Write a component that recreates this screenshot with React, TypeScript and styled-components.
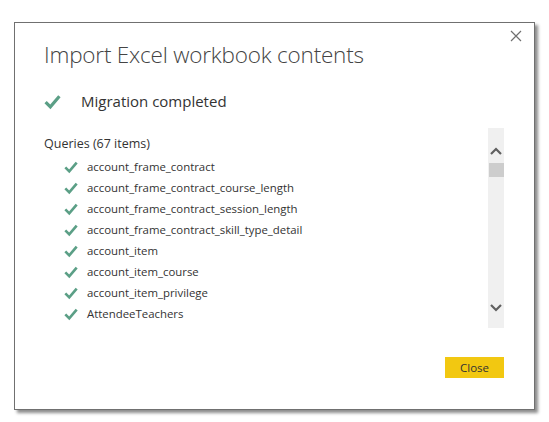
import React from "react";
import styled, { createGlobalStyle } from "styled-components";

const Global = createGlobalStyle`
  html, body { margin: 0; padding: 0; background: #ffffff; }
  body { font-family: "Open Sans", "Noto Sans", sans-serif; color: #333333; }
`;

const Page = styled.div`
  width: 549px;
  height: 422px;
  padding: 22px 0 0 14px;
  box-sizing: border-box;
`;

const Dialog = styled.div`
  position: relative;
  width: 521px;
  height: 388px;
  box-sizing: border-box;
  border: 1px solid #707070;
  background: #ffffff;
  box-shadow: 3px 3px 3px rgba(0, 0, 0, 0.45);
  padding: 15px 30px 0 29px;
  display: flex;
  flex-direction: column;
`;

const CloseX = styled.button`
  position: absolute;
  top: 5px;
  right: 10px;
  width: 16px;
  height: 16px;
  padding: 0;
  border: none;
  background: transparent;
  display: flex;
  align-items: center;
  justify-content: center;
`;

const Title = styled.h1`
  margin: 0;
  font-family: "Open Sans", sans-serif;
  font-weight: 300;
  font-size: 22.5px;
  line-height: 34px;
  color: #444444;
  letter-spacing: -0.2px;
`;

const Status = styled.div`
  display: flex;
  align-items: center;
  margin-top: 17px;
  height: 24px;
`;

const StatusText = styled.span`
  font-size: 15px;
  color: #333333;
  margin-left: 20px;
`;

const Body = styled.div`
  display: flex;
  margin-top: 15px;
  height: 200px;
`;

const List = styled.div`
  flex: 1;
  padding-top: 7px;
`;

const ListHeader = styled.div`
  font-size: 12.5px;
  line-height: 18px;
  color: #333333;
  margin-bottom: 3px;
`;

const Row = styled.div`
  display: flex;
  align-items: center;
  height: 21px;
  padding-left: 20px;
`;

const RowText = styled.span`
  font-size: 11.4px;
  color: #333333;
  margin-left: 9px;
`;

const Scrollbar = styled.div`
  width: 16px;
  background: #f0f0f0;
  display: flex;
  flex-direction: column;
  align-items: center;
  padding-top: 19px;
  box-sizing: border-box;
`;

const Thumb = styled.div`
  width: 15px;
  height: 14px;
  background: #cdcdcd;
  margin-top: 8px;
`;

const Spacer = styled.div`
  flex: 1;
`;

const BottomGap = styled.div`
  height: 16px;
`;

const Footer = styled.div`
  display: flex;
  justify-content: flex-end;
  margin-top: 29px;
`;

const Button = styled.button`
  width: 59px;
  height: 21px;
  border: none;
  background: #f2c811;
  font-family: "Open Sans", sans-serif;
  font-size: 11.5px;
  color: #333333;
  padding: 0;
`;

const Check = ({ size }: { size: number }) => (
  <svg width={size} height={size} viewBox="0 0 16 16">
    <path d="M1.5 8.5 L6 13 L14.5 3" fill="none" stroke="#5b9f86" strokeWidth={3} strokeLinecap="butt" strokeLinejoin="miter" />
  </svg>
);

const Chevron = ({ up }: { up: boolean }) => (
  <svg width="12" height="8" viewBox="0 0 12 8">
    <path d={up ? "M1 7 L6 2 L11 7" : "M1 1 L6 6 L11 1"} fill="none" stroke="#606060" strokeWidth={2.2} />
  </svg>
);

const items = [
  "account_frame_contract",
  "account_frame_contract_course_length",
  "account_frame_contract_session_length",
  "account_frame_contract_skill_type_detail",
  "account_item",
  "account_item_course",
  "account_item_privilege",
  "AttendeeTeachers",
];

export default function App() {
  return (
    <Page>
      <Global />
      <Dialog>
        <CloseX aria-label="Close">
          <svg width="12" height="12" viewBox="0 0 12 12">
            <path d="M1 1 L11 11 M11 1 L1 11" stroke="#707070" strokeWidth={1.2} />
          </svg>
        </CloseX>
        <Title>Import Excel workbook contents</Title>
        <Status>
          <Check size={17} />
          <StatusText>Migration completed</StatusText>
        </Status>
        <Body>
          <List>
            <ListHeader>Queries (67 items)</ListHeader>
            {items.map((it) => (
              <Row key={it}>
                <Check size={14} />
                <RowText>{it}</RowText>
              </Row>
            ))}
          </List>
          <Scrollbar>
            <Chevron up />
            <Thumb />
            <Spacer />
            <Chevron up={false} />
            <BottomGap />
          </Scrollbar>
        </Body>
        <Footer>
          <Button>Close</Button>
        </Footer>
      </Dialog>
    </Page>
  );
}
